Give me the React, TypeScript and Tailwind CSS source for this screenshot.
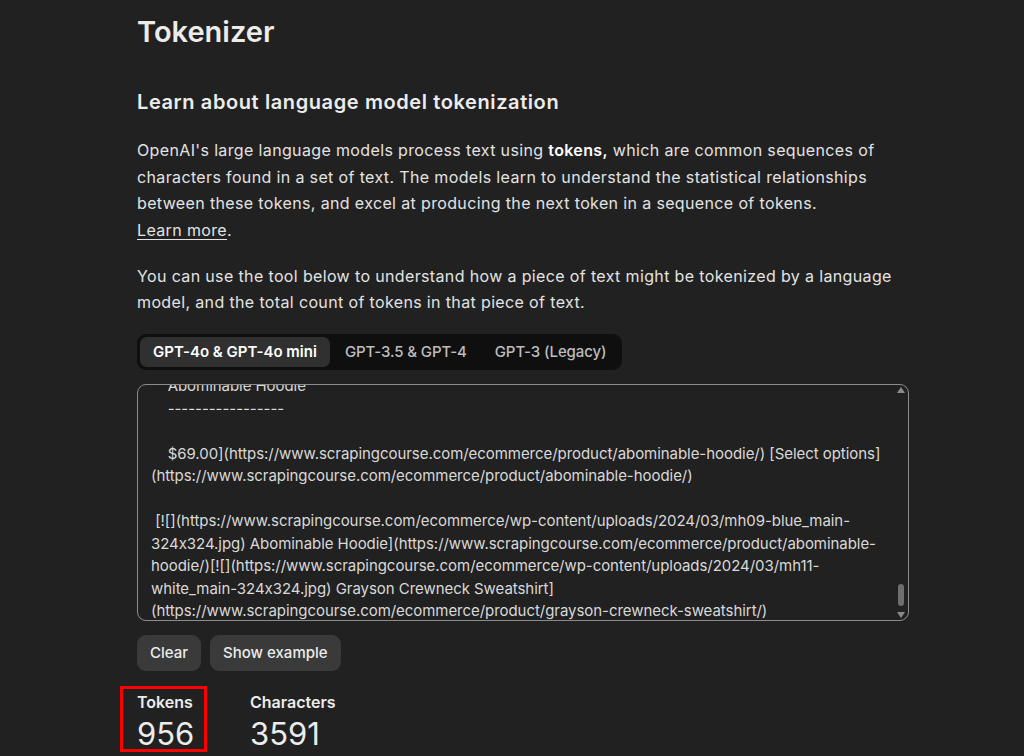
import React from 'react';

const lines = [
  '    Abominable Hoodie',
  '    -----------------',
  '',
  '    $69.00](https://www.scrapingcourse.com/ecommerce/product/abominable-hoodie/) [Select options]',
  '(https://www.scrapingcourse.com/ecommerce/product/abominable-hoodie/)',
  '',
  ' [![](https://www.scrapingcourse.com/ecommerce/wp-content/uploads/2024/03/mh09-blue_main-',
  '324x324.jpg) Abominable Hoodie](https://www.scrapingcourse.com/ecommerce/product/abominable-',
  'hoodie/)[![](https://www.scrapingcourse.com/ecommerce/wp-content/uploads/2024/03/mh11-',
  'white_main-324x324.jpg) Grayson Crewneck Sweatshirt]',
  '(https://www.scrapingcourse.com/ecommerce/product/grayson-crewneck-sweatshirt/)',
];

const tabs = ['GPT-4o & GPT-4o mini', 'GPT-3.5 & GPT-4', 'GPT-3 (Legacy)'];

export default function App() {
  return (
    <div
      className="min-h-[756px] w-full bg-[#212121] text-[#ececec] overflow-hidden [font-feature-settings:'calt'_0]"
      style={{ fontFamily: 'Inter, "Noto Sans", sans-serif' }}
    >
      <div className="ml-[137px] w-[772px] pt-[14px]">
        <h1 className="text-[29px] leading-[36px] font-semibold">Tokenizer</h1>

        <h2 className="mt-[38px] text-[20px] leading-[28px] font-semibold tracking-[0.6px]">
          Learn about language model tokenization
        </h2>

        <p className="mt-[21px] text-[16px] leading-[26.67px] tracking-[0.36px] text-[#e3e3e3]">
          OpenAI's large language models process text using <strong className="font-semibold text-white">tokens,</strong> which
          are common sequences of characters found in a set of text. The models learn to understand the statistical
          relationships between these tokens, and excel at producing the next token in a sequence of tokens.
          <br />
          <a className="underline underline-offset-[3px] decoration-1">Learn more</a>.
        </p>

        <p className="mt-[19px] text-[16px] leading-[26.67px] tracking-[0.36px] text-[#e3e3e3]">
          You can use the tool below to understand how a piece of text might be tokenized by a language model, and the
          total count of tokens in that piece of text.
        </p>

        <div className="mt-[18px] inline-flex h-[36px] items-center gap-[2px] rounded-[9px] bg-[#0f0f0f] p-[3px]">
          {tabs.map((t, i) => (
            <button
              key={t}
              className={
                i === 0
                  ? 'h-[30px] rounded-[7px] bg-[#303030] px-[13px] text-[15px] font-semibold text-white'
                  : 'h-[30px] rounded-[7px] px-[13px] text-[15px] font-medium text-[#bdbdbd] tracking-[-0.1px]'
              }
            >
              {t}
            </button>
          ))}
        </div>

        <div className="relative mt-[14px] h-[237px] overflow-hidden rounded-[9px] border border-[#8c8c8c]">
          <div className="mt-[-10px] pl-[13px] pr-[20px] text-[15px] leading-[22.5px] tracking-[-0.05px] text-[#d9d9d9] whitespace-pre">
            {lines.map((l, i) => (
              <div key={i} className="h-[22.5px]">
                {l}
              </div>
            ))}
          </div>
          {/* scrollbar */}
          <div className="absolute right-[3px] top-[2px] bottom-[2px] w-[8px]">
            <div className="absolute left-0 top-0 h-0 w-0 border-x-[4px] border-b-[6px] border-x-transparent border-b-[#8a8a8a]" />
            <div className="absolute left-[1px] bottom-[12px] h-[22px] w-[6px] rounded-full bg-[#6e6e6e]" />
            <div className="absolute left-0 bottom-0 h-0 w-0 border-x-[4px] border-t-[6px] border-x-transparent border-t-[#8a8a8a]" />
          </div>
        </div>

        <div className="mt-[14px] flex gap-[9px]">
          <button className="h-[36px] rounded-[9px] bg-[#3a3a3a] px-[13px] text-[15px] font-medium text-[#ececec]">
            Clear
          </button>
          <button className="h-[36px] rounded-[9px] bg-[#3a3a3a] px-[13px] text-[15px] font-medium text-[#ececec]">
            Show example
          </button>
        </div>

        <div className="mt-[19px] flex">
          <div className="relative w-[113px]">
            <div className="text-[16px] leading-[24px] font-semibold text-[#ececec]">Tokens</div>
            <div className="text-[31px] leading-[40px] text-[#ececec]">956</div>
            <div className="absolute left-[-17px] top-[-4px] h-[66px] w-[87px] border-[3px] border-[#ff0000]" />
          </div>
          <div>
            <div className="text-[16px] leading-[24px] font-semibold text-[#ececec]">Characters</div>
            <div className="text-[31px] leading-[40px] text-[#ececec]">3591</div>
          </div>
        </div>
      </div>
    </div>
  );
}
